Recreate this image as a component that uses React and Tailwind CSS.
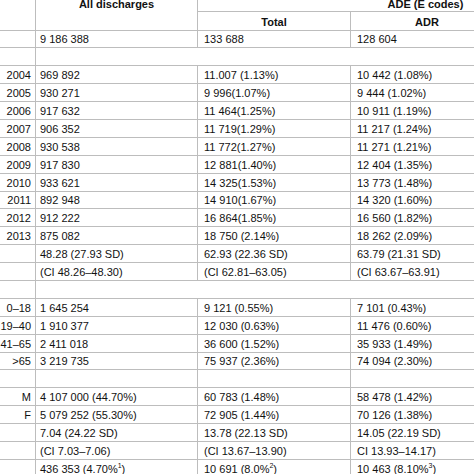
import React from 'react';

const cols = 'grid grid-cols-[35px_162px_153px_153px_150px]';
const line = 'border-[#bdbdbd]';

const rows = [
  ['', '9 186 388', '133 688', '128 604'],
  null,
  ['2004', '969 892', '11.007 (1.13%)', '10 442 (1.08%)'],
  ['2005', '930 271', '9 996(1.07%)', '9 444 (1.02%)'],
  ['2006', '917 632', '11 464(1.25%)', '10 911 (1.19%)'],
  ['2007', '906 352', '11 719(1.29%)', '11 217 (1.24%)'],
  ['2008', '930 538', '11 772(1.27%)', '11 271 (1.21%)'],
  ['2009', '917 830', '12 881(1.40%)', '12 404 (1.35%)'],
  ['2010', '933 621', '14 325(1.53%)', '13 773 (1.48%)'],
  ['2011', '892 948', '14 910(1.67%)', '14 320 (1.60%)'],
  ['2012', '912 222', '16 864(1.85%)', '16 560 (1.82%)'],
  ['2013', '875 082', '18 750 (2.14%)', '18 262 (2.09%)'],
  ['', '48.28 (27.93 SD)', '62.93 (22.36 SD)', '63.79 (21.31 SD)'],
  ['', '(CI 48.26–48.30)', '(CI 62.81–63.05)', '(CI 63.67–63.91)'],
  null,
  ['0–18', '1 645 254', '9 121 (0.55%)', '7 101 (0.43%)'],
  ['19–40', '1 910 377', '12 030 (0.63%)', '11 476 (0.60%)'],
  ['41–65', '2 411 018', '36 600 (1.52%)', '35 933 (1.49%)'],
  ['>65', '3 219 735', '75 937 (2.36%)', '74 094 (2.30%)'],
  ['', '', '', ''],
  ['M', '4 107 000 (44.70%)', '60 783 (1.48%)', '58 478 (1.42%)'],
  ['F', '5 079 252 (55.30%)', '72 905 (1.44%)', '70 126 (1.38%)'],
  ['', '7.04 (24.22 SD)', '13.78 (22.13 SD)', '14.05 (22.19 SD)'],
  ['', '(CI 7.03–7.06)', '(CI 13.67–13.90)', 'CI 13.93–14.17)'],
  ['', <>436 353 (4.70%<sup className="text-[7px]">1</sup>)</>, <>10 691 (8.0%<sup className="text-[7px]">2</sup>)</>, <>10 463 (8.10%<sup className="text-[7px]">3</sup>)</>],
];

const Row = ({ cells }) => {
  if (!cells) {
    return (
      <div className={`${cols} h-[17.9px] border-b ${line}`}>
        <div />
        <div className={`col-span-4 border-l ${line}`} />
      </div>
    );
  }
  return (
    <div className={`${cols} h-[17.9px] border-b ${line} items-center`}>
      <div className="text-right pr-[4px] pt-[2px]">{cells[0]}</div>
      <div className={`h-full border-l ${line} pl-[4px] pt-[2px] flex items-center`}>{cells[1]}</div>
      <div className={`h-full border-l ${line} pl-[6px] pt-[2px] flex items-center`}>{cells[2]}</div>
      <div className={`h-full border-l ${line} pl-[6px] pt-[2px] flex items-center`}>{cells[3]}</div>
      <div className={`h-full border-l ${line}`} />
    </div>
  );
};

export default function App() {
  return (
    <div className="w-[474px] h-[474px] overflow-hidden bg-white text-[#111] text-[11px] leading-[13px] font-['Liberation_Sans',Arial,sans-serif]">
      <div className="w-[653px]">
        <div className={`${cols} grid-rows-[12px_17.5px] border-b ${line} font-bold`}>
          <div className="row-span-2" />
          <div className={`row-span-2 border-l ${line} text-center -mt-[2px]`}>All discharges</div>
          <div className={`col-span-3 border-l border-b ${line} text-center -mt-[2px]`}>ADE (E codes)</div>
          <div className={`border-l ${line} text-center pt-[4px]`}>Total</div>
          <div className={`border-l ${line} text-center pt-[4px]`}>ADR</div>
          <div className={`border-l ${line}`} />
        </div>
        {rows.map((r, i) => (
          <Row key={i} cells={r} />
        ))}
      </div>
    </div>
  );
}
